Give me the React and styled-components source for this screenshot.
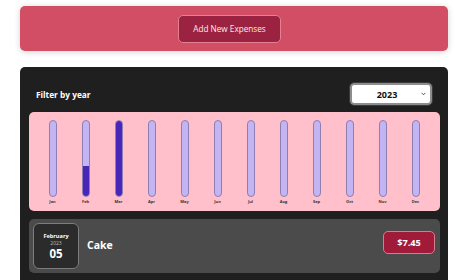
import React from "react";
import styled, { createGlobalStyle } from "styled-components";

const Global = createGlobalStyle`
  html, body { margin: 0; padding: 0; background: #ffffff; }
  body { font-family: "Open Sans", "Noto Sans", sans-serif; }
  * { box-sizing: border-box; }
`;

const Page = styled.div`
  padding: 6px 26px 0 20px;
  display: flex;
  flex-direction: column;
  gap: 16px;
`;

const NewExpense = styled.div`
  height: 45px;
  background: #d24e64;
  border-radius: 5px;
  box-shadow: 0 1px 6px rgba(0, 0, 0, 0.18);
  display: flex;
  align-items: center;
  justify-content: center;
`;

const AddButton = styled.button`
  width: 103px;
  height: 28px;
  background: #9b2241;
  border: 1px solid #e2818f;
  border-radius: 5px;
  color: #fbe9ec;
  font-family: inherit;
  font-size: 8.2px;
  padding: 0;
  margin-right: 9px;
  cursor: pointer;
`;

const Expenses = styled.div`
  background: #1f1f1f;
  border-radius: 5px 5px 0 0;
  padding: 9px 8px 12px 9px;
  height: 220px;
`;

const FilterRow = styled.div`
  display: flex;
  align-items: center;
  justify-content: space-between;
  padding: 0 8px 0 7px;
  margin: 7px 0;
`;

const FilterLabel = styled.span`
  color: #ffffff;
  font-weight: 700;
  font-size: 8.3px;
`;

const SelectBox = styled.div`
  width: 82px;
  height: 22px;
  background: #ffffff;
  border: 2px solid #8d8d8d;
  outline: 1px solid #3a3a3a;
  border-radius: 4px;
  display: flex;
  align-items: center;
  justify-content: center;
  position: relative;
  font-weight: 700;
  font-size: 9px;
  color: #111;
  padding-right: 8px;
`;

const Chevron = styled.svg`
  position: absolute;
  right: 4px;
  top: 50%;
  margin-top: -2px;
`;

const Chart = styled.div`
  height: 99px;
  background: #ffc0cb;
  border-radius: 5px;
  padding: 8px 8px 7px 7px;
  display: flex;
`;

const BarCol = styled.div`
  flex: 1;
  display: flex;
  flex-direction: column;
  align-items: center;
  height: 100%;
`;

const BarInner = styled.div`
  flex: 1;
  width: 8px;
  border: 1px solid #8f7fb0;
  border-radius: 6px;
  background: #c3b4f3;
  overflow: hidden;
  display: flex;
  flex-direction: column;
  justify-content: flex-end;
`;

const BarFill = styled.div`
  background: #4826b9;
  width: 100%;
`;

const BarLabel = styled.div`
  font-size: 4px;
  font-weight: 700;
  color: #333;
  margin-top: 2px;
  line-height: 5px;
`;

const Item = styled.div`
  margin-top: 8px;
  background: #4b4b4b;
  border-radius: 5px;
  height: 54px;
  padding: 4px 5px 4px 4px;
  display: flex;
  align-items: center;
`;

const DateBox = styled.div`
  width: 46px;
  height: 46px;
  background: #2b2b2b;
  border: 1px solid #7c7c7c;
  border-radius: 6px;
  display: flex;
  flex-direction: column;
  align-items: center;
  justify-content: center;
  color: #fff;
`;

const DateMonth = styled.div`
  font-size: 5.6px;
  font-weight: 700;
  line-height: 8px;
`;
const DateYear = styled.div`
  font-size: 5px;
  color: #bbb;
  line-height: 7px;
`;
const DateDay = styled.div`
  font-size: 11.5px;
  font-weight: 700;
  line-height: 14px;
`;

const Description = styled.div`
  flex: 1;
  margin-left: 8px;
  color: #fff;
  font-weight: 700;
  font-size: 10.5px;
  margin-top: -3px;
`;

const Price = styled.div`
  width: 52px;
  height: 23px;
  background: #a01a39;
  border: 1px solid #d97a8a;
  border-radius: 5px;
  color: #fff;
  font-weight: 700;
  font-size: 9.2px;
  display: flex;
  align-items: center;
  justify-content: center;
  margin-top: -8px;
`;

const months = [
  ["Jan", 0], ["Feb", 0.4], ["Mar", 1], ["Apr", 0], ["May", 0], ["Jun", 0],
  ["Jul", 0], ["Aug", 0], ["Sep", 0], ["Oct", 0], ["Nov", 0], ["Dec", 0],
];

export default function App() {
  return (
    <>
      <Global />
      <Page>
        <NewExpense>
          <AddButton>Add New Expenses</AddButton>
        </NewExpense>
        <Expenses>
          <FilterRow>
            <FilterLabel>Filter by year</FilterLabel>
            <SelectBox>
              2023
              <Chevron width="5" height="4" viewBox="0 0 5 4">
                <path d="M0.6 0.8 L2.5 2.8 L4.4 0.8" fill="none" stroke="#444" strokeWidth="0.9" />
              </Chevron>
            </SelectBox>
          </FilterRow>
          <Chart>
            {months.map(([m, v]) => (
              <BarCol key={m}>
                <BarInner>
                  <BarFill style={{ height: `${v * 100}%` }} />
                </BarInner>
                <BarLabel>{m}</BarLabel>
              </BarCol>
            ))}
          </Chart>
          <Item>
            <DateBox>
              <DateMonth>February</DateMonth>
              <DateYear>2023</DateYear>
              <DateDay>05</DateDay>
            </DateBox>
            <Description>Cake</Description>
            <Price>$7.45</Price>
          </Item>
        </Expenses>
      </Page>
    </>
  );
}
